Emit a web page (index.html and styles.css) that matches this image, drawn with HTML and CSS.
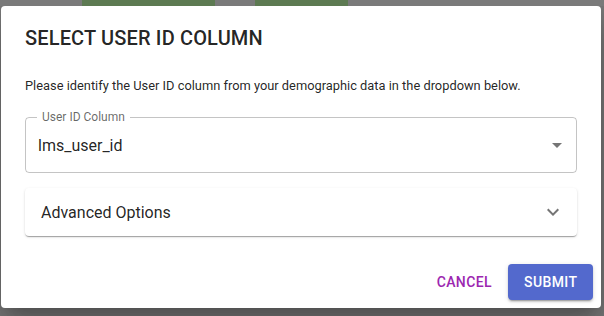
FILE: index.html
```html
<!DOCTYPE html>
<html lang="en">
<head>
<meta charset="utf-8">
<title>Select User ID Column</title>
<link rel="stylesheet" href="styles.css">
</head>
<body>
<div class="backdrop-strip">
  <span class="seg seg-gray w82"></span>
  <span class="seg seg-green w133"></span>
  <span class="seg seg-gray w40"></span>
  <span class="seg seg-green w93"></span>
  <span class="seg seg-gray grow"></span>
</div>
<div class="dialog" role="dialog">
  <h2 class="dialog-title">SELECT USER ID COLUMN</h2>
  <div class="dialog-content">
    <p class="dialog-text">Please identify the User ID column from your demographic data in the dropdown below.</p>
    <div class="select-field">
      <span class="select-label">User ID Column</span>
      <span class="select-value">lms_user_id</span>
      <svg class="select-arrow" width="10" height="5" viewBox="0 0 10 5"><path d="M0 0h10L5 5z" fill="#757575"/></svg>
    </div>
    <div class="accordion">
      <span class="accordion-title">Advanced Options</span>
      <svg class="accordion-icon" width="24" height="24" viewBox="0 0 24 24"><path d="M16.59 8.59 12 13.17 7.41 8.59 6 10l6 6 6-6z" fill="#757575"/></svg>
    </div>
  </div>
  <div class="dialog-actions">
    <button class="btn btn-text">CANCEL</button>
    <button class="btn btn-contained">SUBMIT</button>
  </div>
</div>
</body>
</html>
```

FILE: styles.css
```css
* { box-sizing: border-box; }
html, body { margin: 0; padding: 0; }
body {
  width: 604px;
  height: 316px;
  overflow: hidden;
  background: #7a7a7a;
  font-family: Roboto, "Liberation Sans", sans-serif;
}
.backdrop-strip {
  display: flex;
  height: 6px;
}
.seg { display: block; height: 6px; }
.seg-gray { background: #7a7a7a; }
.seg-green { background: #5d7a52; }
.w82 { width: 82px; }
.w133 { width: 133px; }
.w40 { width: 40px; }
.w93 { width: 93px; }
.grow { flex: 1; }

.dialog {
  margin-left: 1px;
  width: 600px;
  height: 302px;
  background: #fff;
  border-radius: 4px;
  box-shadow: 0 11px 15px -7px rgba(0,0,0,0.2), 0 24px 38px 3px rgba(0,0,0,0.14), 0 9px 46px 8px rgba(0,0,0,0.12);
  display: flex;
  flex-direction: column;
}
.dialog-title {
  margin: 0;
  padding: 16px 24px;
  font-size: 20px;
  font-weight: 500;
  line-height: 32px;
  letter-spacing: 0.15px;
  color: rgba(0,0,0,0.87);
}
.dialog-content {
  padding: 6px 24px 20px;
  display: flex;
  flex-direction: column;
}
.dialog-text {
  margin: 0;
  font-size: 12.85px;
  line-height: 20px;
  color: rgba(0,0,0,0.87);
}
.select-field {
  margin-top: 21px;
  height: 56px;
  border: 1px solid rgba(0,0,0,0.23);
  border-radius: 4px;
  display: flex;
  align-items: center;
  padding: 0 14px 0 12px;
  position: relative;
}
.select-label {
  position: absolute;
  left: 11px;
  top: -9px;
  padding: 0 5px;
  background: #fff;
  font-size: 12px;
  line-height: 16px;
  color: rgba(0,0,0,0.6);
}
.select-value {
  flex: 1;
  font-size: 16px;
  color: rgba(0,0,0,0.87);
  line-height: 23px;
}
.accordion {
  margin-top: 15px;
  height: 48px;
  border-radius: 4px;
  background: #fff;
  box-shadow: 0 2px 1px -1px rgba(0,0,0,0.2), 0 1px 1px 0 rgba(0,0,0,0.14), 0 1px 3px 0 rgba(0,0,0,0.12);
  display: flex;
  align-items: center;
  padding: 0 16px;
}
.accordion-title {
  flex: 1;
  font-size: 16px;
  color: rgba(0,0,0,0.87);
}
.accordion-icon { margin-right: -4px; }
.dialog-actions {
  display: flex;
  justify-content: flex-end;
  align-items: center;
  gap: 8px;
  padding: 8px;
}
.btn {
  font-family: Roboto, "Liberation Sans", sans-serif;
  font-size: 14px;
  font-weight: 500;
  letter-spacing: 0.4px;
  line-height: 24px;
  border: 0;
  border-radius: 4px;
  cursor: pointer;
}
.btn-text {
  background: transparent;
  color: #9c27b0;
  padding: 6px 8px;
}
.btn-contained {
  background: #5369cd;
  color: #fff;
  padding: 6px 16px;
  height: 36px;
  width: 85px;
  box-shadow: 0 3px 1px -2px rgba(0,0,0,0.2), 0 2px 2px 0 rgba(0,0,0,0.14), 0 1px 5px 0 rgba(0,0,0,0.12);
}
```
